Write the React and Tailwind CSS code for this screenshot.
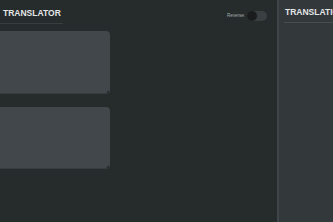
import React, { useState } from 'react';

const InputBox = ({ className }) => (
  <div className={`relative w-[110px] ${className}`}>
    <textarea className="block w-full h-full resize-none bg-[#41474a] border-b border-[#373c3f] rounded-r-[4px] outline-none text-[8px] text-[#e4e6e7] p-[4px]" />
    {/* resize grip */}
    <span className="absolute right-[1px] bottom-[1px] w-0 h-0 border-l-[3px] border-l-transparent border-b-[3px] border-b-[#2a2e30]" />
  </div>
);

const App = () => {
  const [reverse, setReverse] = useState(false);

  return (
    <div className="w-[333px] h-[222px] flex overflow-hidden bg-[#262b2c] font-['Liberation_Sans',Arial,sans-serif]">
      {/* Translator panel */}
      <div className="w-[277px] shrink-0 flex flex-col">
        <div className="h-[31px] flex justify-between items-start">
          <div className="w-[63px] border-b border-[#383d40] pt-[8px] pb-[5px] pl-[3px]">
            <h1 className="text-[8.5px] leading-[10px] font-bold text-[#e4e6e7] whitespace-nowrap">TRANSLATOR</h1>
          </div>
          <div className="flex items-center gap-[2px] pt-[11px] pr-[10px]">
            <span className="text-[4.5px] leading-[10px] text-[#a9adaf]">Reverse:</span>
            <button
              onClick={() => setReverse(!reverse)}
              className={`w-[20px] h-[10px] rounded-full flex items-center ${
                reverse ? 'bg-[#4b8be0] justify-end' : 'bg-[#3a3f41] justify-start'
              }`}
            >
              <span className="w-[10px] h-[10px] rounded-full bg-[#1a1d1e]" />
            </button>
          </div>
        </div>

        {/* Input boxes */}
        <InputBox className="h-[63px]" />
        <InputBox className="mt-[13px] h-[62px]" />
      </div>

      {/* Translation panel */}
      <div className="flex-1 min-w-0 overflow-hidden border-l-2 border-[#3f4548] bg-[#33383b] pl-[5px]">
        <div className="border-b border-[#474d50] pt-[7px] pb-[5px] pl-[1px]">
          <h2 className="text-[8.5px] leading-[10px] font-bold text-[#e4e6e7] whitespace-nowrap">TRANSLATION</h2>
        </div>
      </div>
    </div>
  );
};

export default App;
